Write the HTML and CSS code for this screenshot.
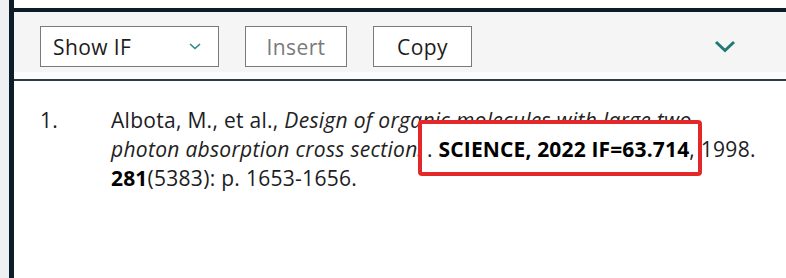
FILE: index.html
```html
<!DOCTYPE html>
<html lang="en">

<head>
     <meta charset="UTF-8" />
     <title>Bibliography</title>
     <link rel="stylesheet" href="styles.css">
</head>

<body>
     <div class="panel">
          <div class="toolbar">
               <button class="select">
                    <span>Show IF</span>
                    <svg width="12" height="7" viewBox="0 0 12 7"><path d="M1 1 L6 5.5 L11 1" fill="none" stroke="#2a8a86" stroke-width="1.6"/></svg>
               </button>
               <button class="btn disabled">Insert</button>
               <button class="btn">Copy</button>
               <span class="expand">
                    <svg width="22" height="13" viewBox="0 0 22 13"><path d="M2 2 L11 10.5 L20 2" fill="none" stroke="#1f7a76" stroke-width="3"/></svg>
               </span>
          </div>

          <ol class="refs">
               <li>
                    <span class="num">1.</span>
                    <p>Albota, M., et al., <em>Design of organic molecules with large two photon absorption cross sections</em><span class="mark">. <strong>SCIENCE, 2022 IF=63.714</strong>,</span> 1998. <strong>281</strong>(5383): p. 1653-1656.</p>
               </li>
          </ol>
     </div>
</body>

</html>
```

FILE: styles.css
```css
* {
     box-sizing: border-box;
     margin: 0;
     padding: 0;
}

body {
     font-family: 'Open Sans', sans-serif;
     background: #eff0f2;
     color: #1c1c24;
     height: 278px;
     overflow: hidden;
}

.panel {
     margin-left: 9px;
     height: 100%;
     background: white;
     border-left: 5px solid #0c1c2b;
     padding-top: 8px;
}

.toolbar {
     display: flex;
     align-items: center;
     gap: 26px;
     height: 73px;
     padding: 14px 26px 12px;
     border-top: 4px solid #0c1c2b;
     border-bottom: 2px solid #2e3a44;
     background: linear-gradient(#f5f5f5 0, #f5f5f5 60px, #fafbfc 60px);
}

.toolbar button {
     height: 41px;
     background: white;
     border: 1px solid #7a7a7a;
     font-family: inherit;
     font-size: 21px;
     letter-spacing: 0.4px;
     color: #1c1c1c;
}

.select {
     width: 179px;
     display: flex;
     align-items: center;
     justify-content: space-between;
     padding: 0 17px 0 12px;
}

.btn.disabled {
     width: 102px;
     color: #7a7a7a !important;
}

.btn {
     width: 99px;
}

.expand {
     margin-left: auto;
     margin-right: 24px;
     display: flex;
}

.refs {
     list-style: none;
     padding: 25px 26px 0 26px;
}

.refs li {
     display: flex;
     font-size: 21px;
     letter-spacing: 0.29px;
     line-height: 29px;
}

.num {
     width: 71px;
     flex-shrink: 0;
}

.refs p {
     width: 647px;
}

.refs em {
     color: #222;
}

.refs strong {
     color: #000;
     letter-spacing: 0.15px;
}

.mark {
     position: relative;
     z-index: 1;
}

.mark::before {
     content: "";
     position: absolute;
     left: -9px;
     right: -7px;
     top: -15px;
     bottom: -13px;
     border: 4px solid #e4282a;
     border-radius: 4px;
     background: white;
     z-index: -1;
}
```
